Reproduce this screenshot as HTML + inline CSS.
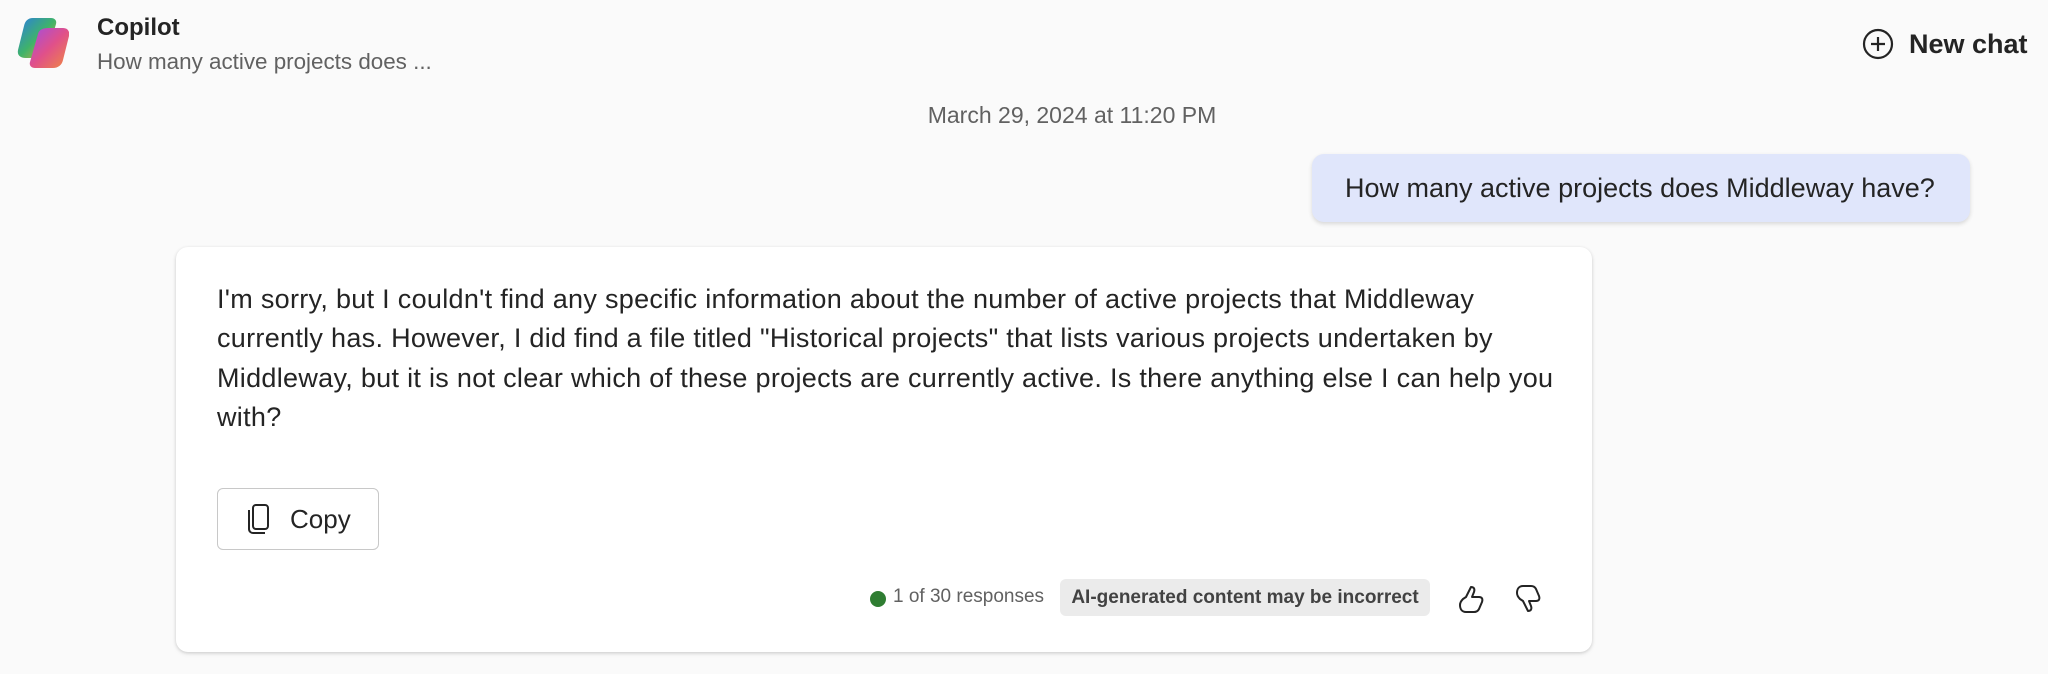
<!DOCTYPE html>
<html><head><meta charset="utf-8"><style>
*{margin:0;padding:0;box-sizing:border-box}
body{width:2048px;height:674px;background:#fafafa;font-family:"Liberation Sans",sans-serif;color:#242424;position:relative;overflow:hidden}
.abs{position:absolute;white-space:nowrap}
.title{left:97px;top:14px;font-size:24px;font-weight:bold}
.sub{left:97px;top:49px;font-size:22.4px;color:#616161}
.newchat{left:1909px;top:29px;font-size:27px;font-weight:bold}
.date{left:0;width:2144px;text-align:center;top:102px;font-size:23px;color:#616161}
.user{left:1312px;top:154px;width:658px;height:68px;background:#e0e6fb;border-radius:12px;box-shadow:0 2px 4px rgba(0,0,0,.14);font-size:27px;line-height:68px;padding-left:33px}
.card{left:176px;top:247px;width:1416px;height:405px;background:#fff;border-radius:12px;box-shadow:0 1px 3px rgba(0,0,0,.15),0 2px 6px rgba(0,0,0,.06)}
.txt{left:217px;top:280px;font-size:27px;letter-spacing:0.3px;line-height:39.3px}
.copy{left:217px;top:488px;width:162px;height:62px;border:1px solid #c8c8c8;border-radius:6px;background:#fff;font-size:26px;line-height:60px;padding-left:72px}
.resp{left:893px;top:586px;font-size:19px;color:#616161}
.badge{left:1060px;top:579px;width:370px;height:37px;background:#ebebeb;border-radius:6px;font-size:19px;font-weight:bold;color:#424242;line-height:37px;text-align:center}
</style></head><body>
<svg class="abs" style="left:13px;top:16px" width="56" height="54" viewBox="0 0 56 54">
<defs><linearGradient id="g1" x1="0" y1="0" x2="1" y2="1"><stop offset="0" stop-color="#2a7de1"/><stop offset=".5" stop-color="#3fb36a"/><stop offset="1" stop-color="#f0b030"/></linearGradient>
<linearGradient id="g2" x1="0" y1="0" x2="1" y2="1"><stop offset="0" stop-color="#a24ee0"/><stop offset=".5" stop-color="#e0508a"/><stop offset="1" stop-color="#f08a40"/></linearGradient></defs>
<path d="M20 2 h18 c4 0 6 3 5 6 l-8 28 c-1 4-4 6-8 6 h-14 c-6 0-9-3-8-8 l6-24 c1-5 4-8 9-8z" fill="url(#g1)"/>
<path d="M36 12 h14 c5 0 7 4 6 8 l-6 24 c-1 5-5 8-10 8 h-18 c-4 0-6-3-5-6 l8-28 c1-4 4-6 11-6z" fill="url(#g2)"/>
</svg>
<div class="abs title">Copilot</div>
<div class="abs sub">How many active projects does ...</div>
<svg class="abs" style="left:1861px;top:27px" width="34" height="34" viewBox="0 0 34 34" fill="none" stroke="#242424" stroke-width="2.2"><circle cx="17" cy="17" r="14"/><path d="M17 10v14M10 17h14"/></svg>
<div class="abs newchat">New chat</div>
<div class="abs date">March 29, 2024 at 11:20 PM</div>
<div class="abs user">How many active projects does Middleway have?</div>
<div class="abs card"></div>
<div class="abs txt">I'm sorry, but I couldn't find any specific information about the number of active projects that Middleway<br>currently has. However, I did find a file titled "Historical projects" that lists various projects undertaken by<br>Middleway, but it is not clear which of these projects are currently active. Is there anything else I can help you<br>with?</div>
<div class="abs copy">Copy</div>
<svg class="abs" style="left:246px;top:503px" width="26" height="32" viewBox="0 0 26 32" fill="none" stroke="#242424" stroke-width="2"><rect x="7" y="2" width="15" height="24" rx="3"/><path d="M3 7v19c0 2.5 2 4 4 4h12"/></svg>
<div class="abs" style="left:870px;top:591px;width:16px;height:16px;border-radius:50%;background:#2f7d32"></div>
<div class="abs resp">1 of 30 responses</div>
<div class="abs badge">AI-generated content may be incorrect</div>
<svg class="abs" style="left:1457px;top:584px" width="28" height="30" viewBox="0 0 28 30" fill="none" stroke="#242424" stroke-width="2" stroke-linejoin="round"><path d="M9 13 L14 3 c3 0 4 2 3 5 l-2 5 h7 c3 0 4 2 3 5 l-3 7 c-1 2-3 3-5 3 h-8 c-4 0-6-3-6-7 c0-3 2-5 3-6z"/></svg>
<svg class="abs" style="left:1514px;top:584px" width="28" height="30" viewBox="0 0 28 30" fill="none" stroke="#242424" stroke-width="2" stroke-linejoin="round"><path d="M9 17 L14 27 c3 0 4-2 3-5 l-2-5 h7 c3 0 4-2 3-5 l-3-7 c-1-2-3-3-5-3 h-8 c-4 0-6 3-6 7 c0 3 2 5 3 6z"/></svg>
</body></html>
